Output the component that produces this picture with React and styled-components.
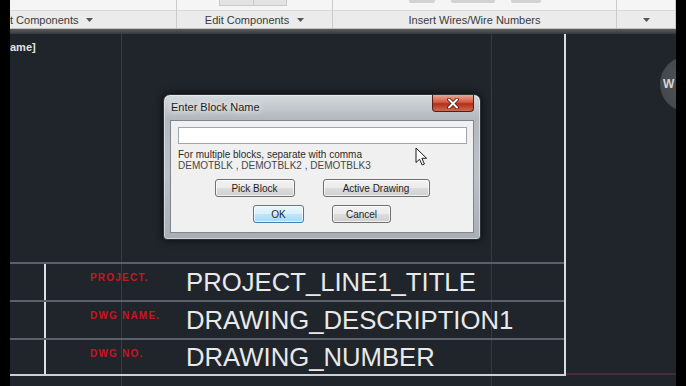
import React from 'react';
import styled, { createGlobalStyle } from 'styled-components';

const GlobalStyle = createGlobalStyle`
  html, body {
    margin: 0;
    padding: 0;
    background: #000;
  }
  * {
    box-sizing: border-box;
  }
`;

const rows = [
  { label: 'PROJECT.', value: 'PROJECT_LINE1_TITLE', height: 38 },
  { label: 'DWG NAME.', value: 'DRAWING_DESCRIPTION1', height: 38 },
  { label: 'DWG NO.', value: 'DRAWING_NUMBER', height: 36 },
];

//Ribbon arrow
const Caret = () => (
  <svg width="7" height="4" viewBox="0 0 7 4">
    <path d="M0 0 L7 0 L3.5 4 Z" fill="#555" />
  </svg>
);

const Pointer = () => (
  <svg width="13" height="19" viewBox="0 0 13 19">
    <path
      d="M1 1 L1 15.5 L4.6 12.2 L7.2 18 L9.4 17 L6.9 11.3 L11.6 11.3 Z"
      fill="#fff"
      stroke="#1a1a1a"
      strokeWidth="1"
      strokeLinejoin="round"
    />
  </svg>
);

const CloseGlyph = () => (
  <svg width="12" height="11" viewBox="0 0 12 11">
    <path d="M2 1.5 L10 9.5 M10 1.5 L2 9.5" stroke="#5a1308" strokeWidth="3.6" strokeLinecap="round" />
    <path d="M2 1.5 L10 9.5 M10 1.5 L2 9.5" stroke="#fff" strokeWidth="2" strokeLinecap="round" />
  </svg>
);

const App = () => (
  <>
    <GlobalStyle />
    <Page>
      <Edge />
      <Main>
        <Ribbon>
          <Panel $width={167}>
            <PanelTop />
            <PanelLabel $align="flex-start">
              t Components <Caret />
            </PanelLabel>
          </Panel>
          <Panel $width={156}>
            <PanelTop>
              <MiniButtons>
                <MiniButton />
                <MiniButton />
              </MiniButtons>
            </PanelTop>
            <PanelLabel>
              Edit Components <Caret />
            </PanelLabel>
          </Panel>
          <Panel $width={284}>
            <PanelTop>
              <Smudge $width={26} />
              <Smudge $width={44} />
              <Smudge $width={30} />
            </PanelTop>
            <PanelLabel>Insert Wires/Wire Numbers</PanelLabel>
          </Panel>
          <Panel $width={59}>
            <PanelTop />
            <PanelLabel>
              <Caret />
            </PanelLabel>
          </Panel>
        </Ribbon>
        <RibbonShade />

        <Canvas>
          <GridLine $x={111} />
          <GridLine $x={481} />
          <RedTrace />

          <Sheet>
            <SheetHeader>ame]</SheetHeader>
            <TitleBlock>
              {rows.map((r) => (
                <TitleRow key={r.label} $height={r.height}>
                  <StubCell />
                  <LabelCell>{r.label}</LabelCell>
                  <ValueCell>{r.value}</ValueCell>
                </TitleRow>
              ))}
            </TitleBlock>
          </Sheet>

          <Wheel>W</Wheel>

          <Dialog>
            <TitleBar>
              <DialogTitle>Enter Block Name</DialogTitle>
              <CloseButton>
                <CloseGlyph />
              </CloseButton>
            </TitleBar>
            <Client>
              <NameInput type="text" />
              <Help>
                <div>For multiple blocks, separate with comma</div>
                <HelpSample>DEMOTBLK , DEMOTBLK2 , DEMOTBLK3</HelpSample>
              </Help>
              <ButtonRow>
                <Button $width={80}>Pick Block</Button>
                <Button $width={107}>Active Drawing</Button>
              </ButtonRow>
              <ButtonRow>
                <Button $width={51} $primary>OK</Button>
                <Button $width={59}>Cancel</Button>
              </ButtonRow>
            </Client>
          </Dialog>

          <Cursor>
            <Pointer />
          </Cursor>
        </Canvas>
      </Main>
      <Edge />
    </Page>
  </>
);

export default App;

//Page frame
const Page = styled.div`
  display: flex;
  width: 686px;
  height: 386px;
  overflow: hidden;
  background: #000;
  font-family: 'Liberation Sans', Arial, sans-serif;
`;

const Edge = styled.div`
  flex: 1 0 10px;
  background: #000;
`;

const Main = styled.div`
  flex: 0 0 666px;
  display: flex;
  flex-direction: column;
`;

//Ribbon
const Ribbon = styled.div`
  display: flex;
  height: 28px;
  background: #f5f5f5;
`;

const Panel = styled.div`
  width: ${(p) => p.$width}px;
  display: flex;
  flex-direction: column;
  border-right: 1px solid #cbcbcb;
`;

const PanelTop = styled.div`
  height: 10px;
  display: flex;
  justify-content: center;
  gap: 16px;
  overflow: hidden;
`;

const MiniButtons = styled.div`
  display: flex;
  height: 6px;
  margin-left: -4px;
  border: 1px solid #cacaca;
  border-top: none;
`;

const MiniButton = styled.div`
  width: 33px;
  background: #e3e3e3;
  & + & {
    border-left: 1px solid #cacaca;
  }
`;

// blurred, cut-off button captions at the top of the panel
const Smudge = styled.div`
  width: ${(p) => p.$width}px;
  height: 3px;
  border-radius: 0 0 2px 2px;
  background: #d2d2d2;
`;

const PanelLabel = styled.div`
  height: 18px;
  display: flex;
  align-items: center;
  justify-content: ${(p) => p.$align || 'center'};
  gap: 8px;
  border-top: 1px solid #d9d9d9;
  background: #ebebeb;
  font-size: 11px;
  color: #3a3a3a;
  white-space: nowrap;
`;

const RibbonShade = styled.div`
  height: 5px;
  background: linear-gradient(#c2c2c2 0, #c2c2c2 1px, #5a5a5a 1px, #414141 100%);
`;

//Drawing canvas
const Canvas = styled.div`
  position: relative;
  flex: 1;
  overflow: hidden;
  background: #1f252b;
  border-top: 1px solid #363c43;
`;

const GridLine = styled.div`
  position: absolute;
  top: 0;
  bottom: 0;
  left: ${(p) => p.$x}px;
  width: 1px;
  background: #353b42;
`;

const RedTrace = styled.div`
  position: absolute;
  left: 556px;
  right: 0;
  top: 339px;
  height: 2px;
  background: #472b3a;
`;

const Sheet = styled.div`
  position: relative;
  width: 556px;
  height: 342px;
  display: flex;
  flex-direction: column;
  border-right: 2px solid #d9dde0;
  border-bottom: 2px solid #cdd1d4;
`;

const SheetHeader = styled.div`
  flex: 1;
  padding-top: 7px;
  font-size: 11px;
  font-weight: 700;
  color: #e4e4e4;
`;

const TitleBlock = styled.div`
  display: flex;
  flex-direction: column;
`;

const TitleRow = styled.div`
  display: grid;
  grid-template-columns: 36px 140px 1fr;
  height: ${(p) => p.$height}px;
  border-top: 2px solid #5b6168;
`;

const StubCell = styled.div`
  border-right: 2px solid #dcdfe2;
`;

const LabelCell = styled.div`
  padding: 9px 0 0 44px;
  font-size: 10px;
  line-height: 10px;
  font-weight: 700;
  letter-spacing: 1.2px;
  color: #cc1420;
  white-space: nowrap;
`;

const ValueCell = styled.div`
  display: flex;
  align-items: center;
  font-size: 25.7px;
  line-height: 26px;
  color: #e9e9e9;
  white-space: nowrap;
`;

const Wheel = styled.div`
  position: absolute;
  left: 650px;
  top: 22px;
  width: 56px;
  height: 56px;
  display: flex;
  align-items: center;
  padding-left: 3px;
  border-radius: 50%;
  background: radial-gradient(circle at 60% 50%, #55595d, #3f4347);
  font-size: 12px;
  font-weight: 700;
  color: #d6d6d6;
`;

//Dialog
const Dialog = styled.div`
  position: absolute;
  left: 153px;
  top: 60px;
  width: 318px;
  height: 146px;
  display: flex;
  flex-direction: column;
  padding: 0 6px 6px;
  border: 1px solid #2b3035;
  border-radius: 7px 7px 4px 4px;
  background: linear-gradient(180deg, #d6dade 0%, #b3b9bf 16%, #bcc1c6 55%, #a8aeb4 100%);
  box-shadow: 0 0 8px rgba(0, 0, 0, 0.7), inset 0 0 0 1px rgba(255, 255, 255, 0.45);
`;

const TitleBar = styled.div`
  height: 25px;
  display: flex;
  align-items: flex-start;
  justify-content: space-between;
`;

const DialogTitle = styled.div`
  padding: 6px 0 0 1px;
  font-size: 11px;
  color: #1c1c1c;
  text-shadow: 0 0 5px #fff, 0 0 8px rgba(255, 255, 255, 0.8);
`;

const CloseButton = styled.div`
  width: 42px;
  height: 17px;
  display: flex;
  align-items: center;
  justify-content: center;
  border: 1px solid #5e1a10;
  border-top: none;
  border-radius: 0 0 4px 4px;
  background: linear-gradient(180deg, #e9a797 0%, #d25a42 45%, #b42e18 55%, #cd6a4f 100%);
`;

const Client = styled.div`
  flex: 1;
  display: flex;
  flex-direction: column;
  padding: 6px 7px 0;
  border: 1px solid #7e858c;
  background: #f0f0f0;
`;

const NameInput = styled.input`
  width: 289px;
  height: 17px;
  margin: 0;
  padding: 0;
  border: 1px solid #9ea6ae;
  background: #fff;
  outline: none;
`;

const Help = styled.div`
  margin-top: 5px;
  font-size: 10px;
  line-height: 11px;
  color: #2a2a2a;
  white-space: nowrap;
`;

const HelpSample = styled.div`
  color: #474747;
`;

const ButtonRow = styled.div`
  display: flex;
  justify-content: center;
  gap: 28px;
  margin-top: 8px;
`;

const Button = styled.div`
  width: ${(p) => p.$width}px;
  height: 18px;
  display: flex;
  align-items: center;
  justify-content: center;
  border: 1px solid ${(p) => (p.$primary ? '#3c7fb1' : '#707070')};
  border-radius: 3px;
  background: ${(p) =>
    p.$primary
      ? 'linear-gradient(180deg, #eaf6fd 0%, #d9f0fc 50%, #bee6fd 51%, #a7d9f5 100%)'
      : 'linear-gradient(180deg, #f2f2f2 0%, #ebebeb 50%, #dddddd 51%, #cfcfcf 100%)'};
  box-shadow: inset 0 0 0 1px rgba(255, 255, 255, 0.7);
  font-size: 10px;
  color: #1e1e1e;
`;

const Cursor = styled.div`
  position: absolute;
  left: 405px;
  top: 113px;
  line-height: 0;
`;
